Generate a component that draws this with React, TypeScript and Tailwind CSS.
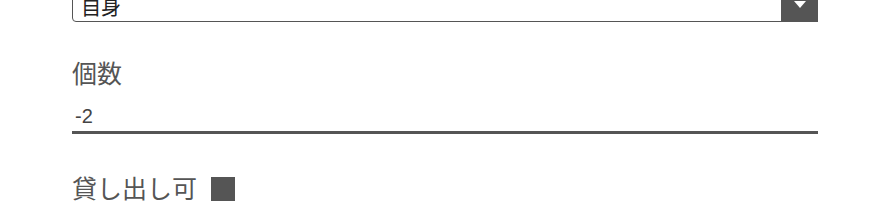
export default function App() {
  const font = { fontFamily: "'Liberation Sans', 'Noto Sans CJK JP', sans-serif" };
  return (
    <div className="w-[870px] h-[204px] overflow-hidden bg-white">
      <div className="pl-[72px] pr-[52px] text-[#555555]" style={font}>
        <div className="-mt-[12px] h-[34px] border border-[#555555] rounded-bl-[4px] rounded-tl-[4px] flex">
          <div className="flex-1 pl-[8px] pt-[3px] text-[20px] leading-[32px] text-[#222222]">自身</div>
          <div className="w-[37px] -mr-[1px] -mb-[1px] bg-[#555555] flex justify-center items-start pt-[12px]">
            <svg width="12" height="7" viewBox="0 0 12 7">
              <path d="M0 0 L12 0 L6 7 Z" fill="#ffffff" />
            </svg>
          </div>
        </div>
        <div className="mt-[34px] text-[25px] leading-[36px] text-[#555555]">個数</div>
        <div className="mt-[12px] h-[30px] pl-[3px] text-[20px] leading-[24px] pb-[3px] border-b-[3px] border-[#555555] text-[#444444]">-2</div>
        <div className="mt-[37px] flex items-center h-[36px]">
          <span className="text-[25px] leading-[36px] text-[#555555]">貸し出し可</span>
          <span className="ml-[14px] w-[24px] h-[24px] bg-[#555555] inline-block"></span>
        </div>
      </div>
    </div>
  );
}
